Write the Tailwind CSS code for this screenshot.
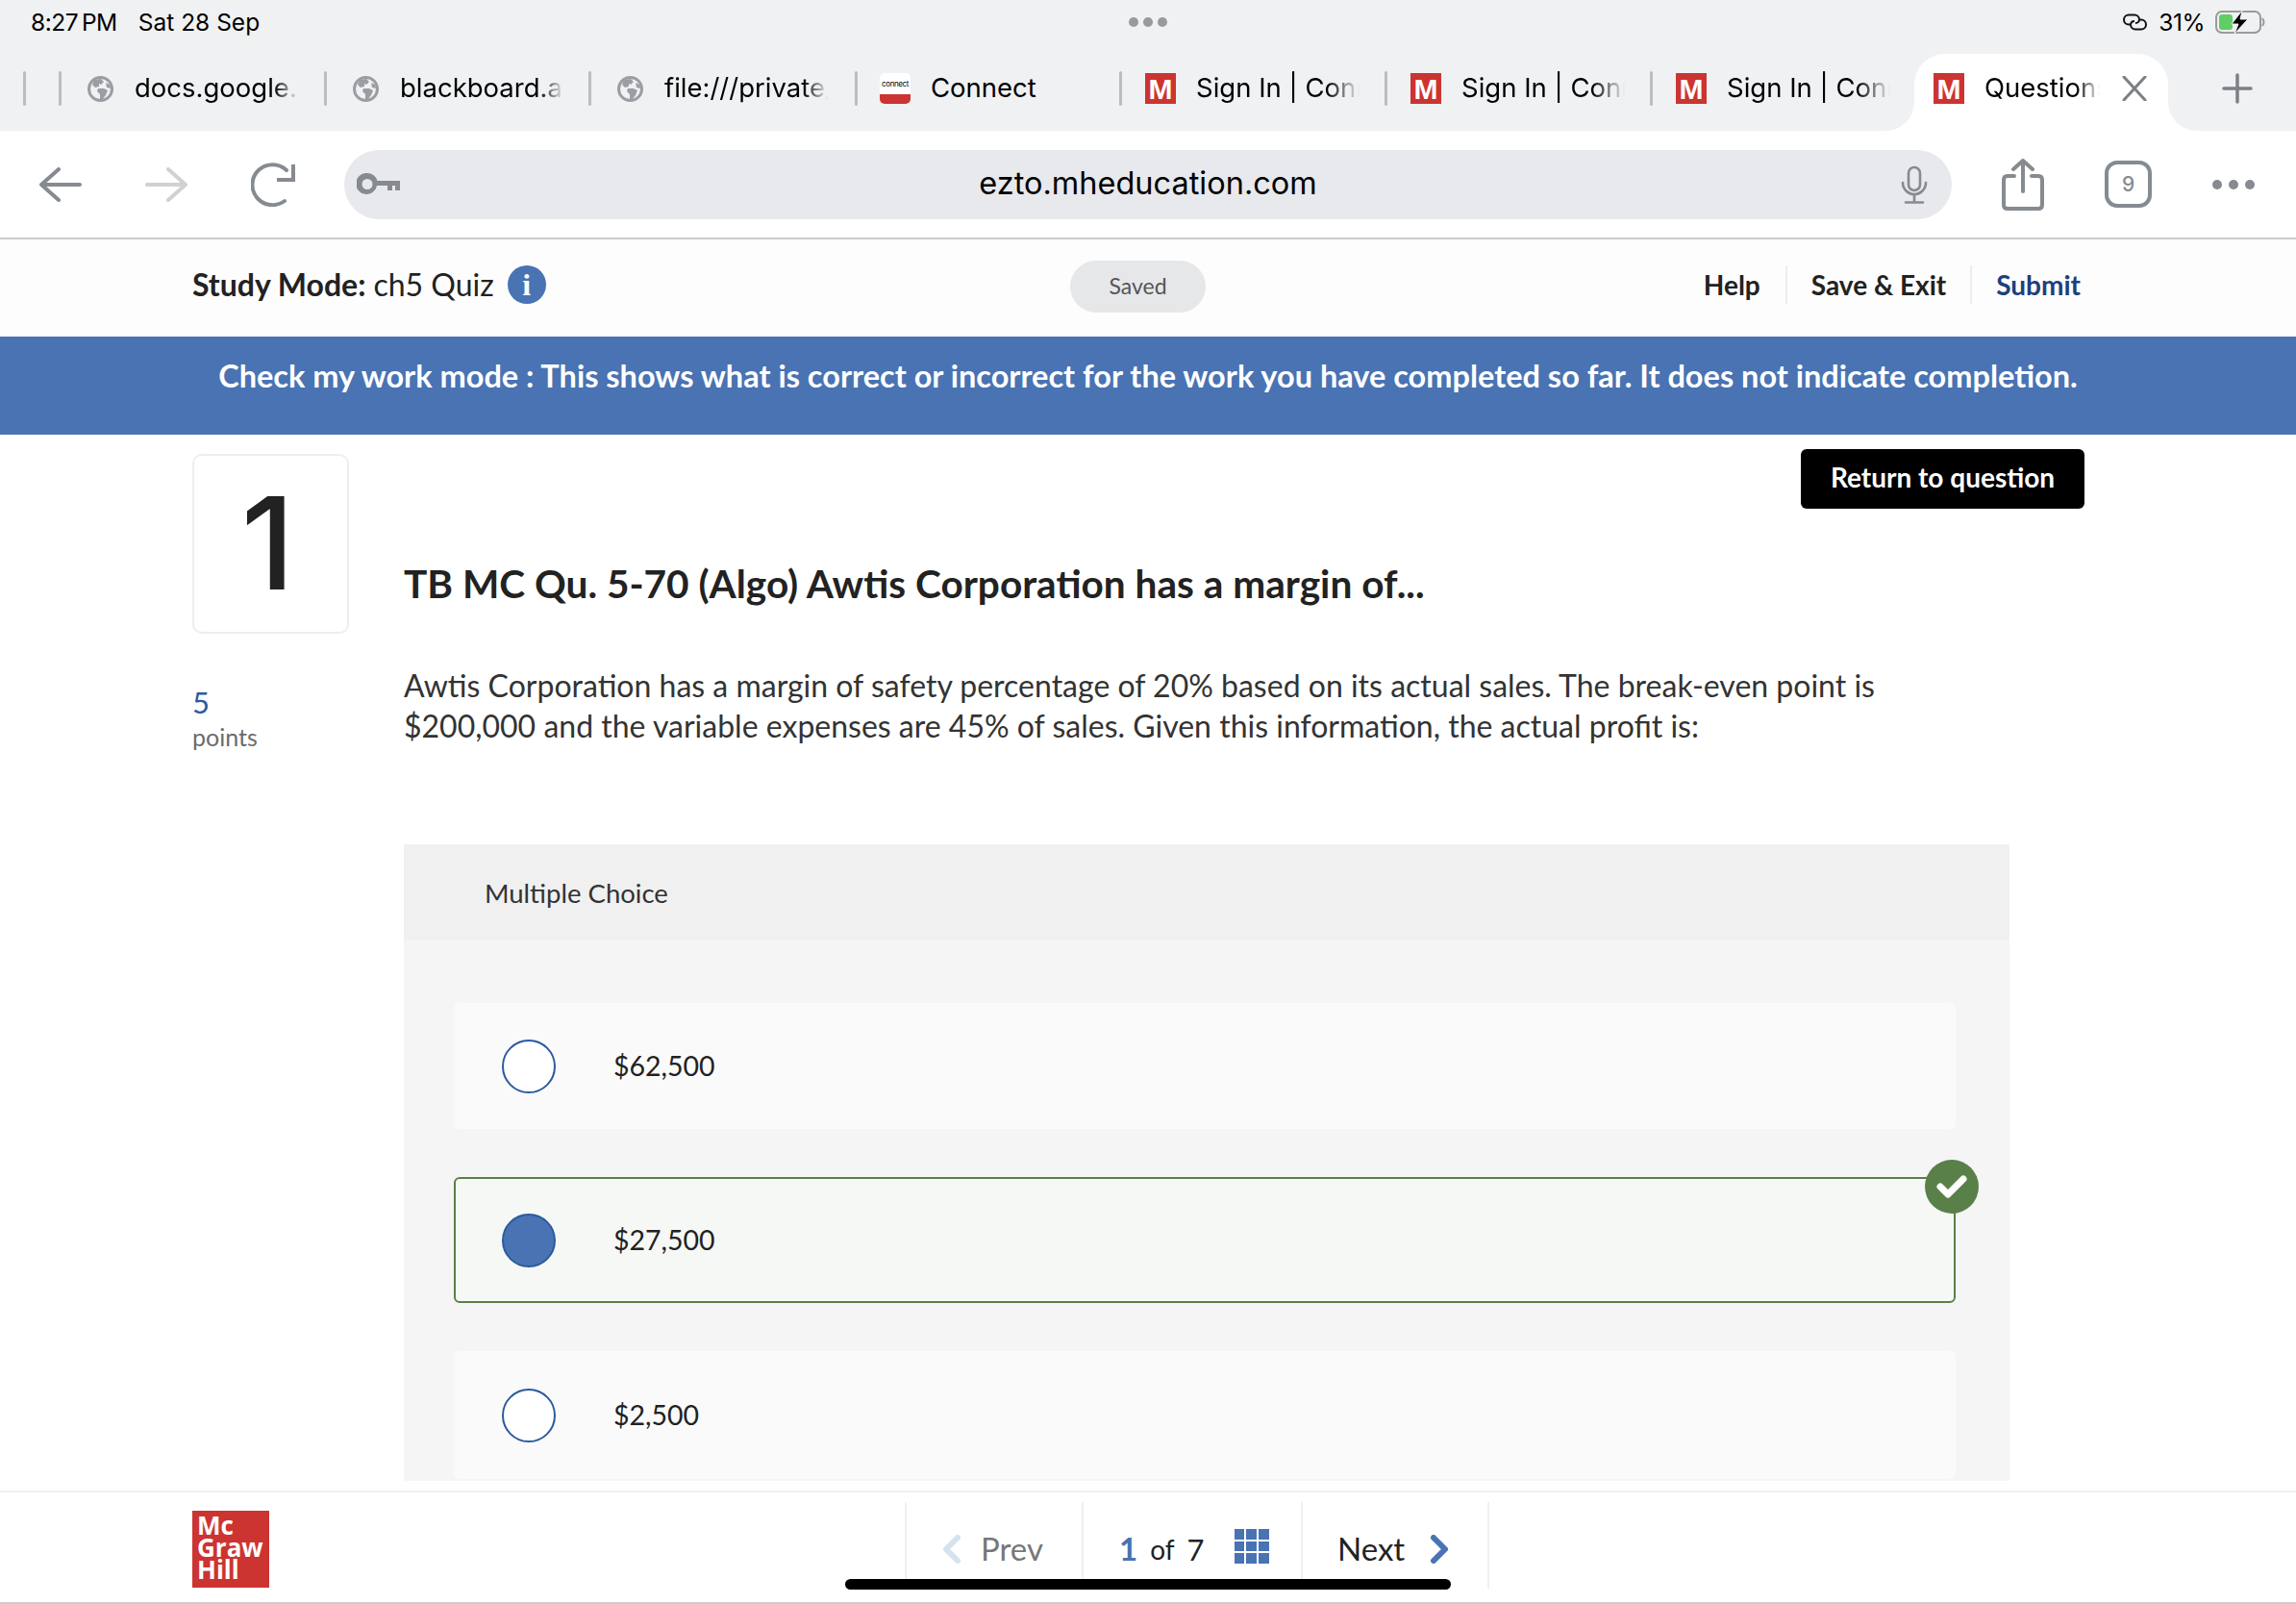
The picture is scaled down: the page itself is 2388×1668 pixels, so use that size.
<!DOCTYPE html>
<html lang="en">
<head>
    <meta charset="UTF-8">
    <title>Question 1 - ch5 Quiz</title>
    <script src="https://cdn.jsdelivr.net/npm/@tailwindcss/browser@4"></script>
</head>
<body class="bg-white">
    <svg class="hidden">
        <symbol id="globe" viewBox="0 0 27 27">
            <circle cx="13.5" cy="13.5" r="12" fill="#f0f1f3" stroke="#9a9ea3" stroke-width="3"/>
            <path d="M7 4 L14 3 L17 6 L14 9 L12 8 L12 11 L8 12 L5 9 Z M11 13 L17 13 L21 15 L19 20 L15 25 L13 24 L13 19 L10 16 Z M19 7 L23 9 L24 13 L20 12 Z" fill="#9a9ea3"/>
        </symbol>
    </svg>

    <div class="relative w-[2388px] h-[1668px] overflow-hidden flex flex-col font-['Lato',sans-serif]">

        <!-- status bar -->
        <div class="h-[46px] bg-[#f0f1f3] flex items-center justify-between pl-[32px] pr-[31px] font-['Inter',sans-serif] text-[24.500px] text-black">
            <div class="w-[400px] flex gap-[22px]"><span class="tracking-[-0.5px]">8:27&#8201;PM</span><span>Sat 28 Sep</span></div>
            <div class="flex gap-[5px] -ml-[2px]">
                <span class="w-[10px] h-[10px] rounded-full bg-[#9a9a9a]"></span>
                <span class="w-[10px] h-[10px] rounded-full bg-[#9a9a9a]"></span>
                <span class="w-[10px] h-[10px] rounded-full bg-[#9a9a9a]"></span>
            </div>
            <div class="w-[400px] flex items-center justify-end gap-[11px]">
                <svg width="27" height="18" viewBox="0 0 27 18" fill="none" stroke="#111" stroke-width="2"><path d="M9 11.500 H7 A5 5 0 0 1 7 1.500 H13 A5 5 0 0 1 18 6.500 A4 4 0 0 1 14 10"/><path d="M18 6.500 H20 A5 5 0 0 1 20 16.500 H14 A5 5 0 0 1 9 11.500 A4 4 0 0 1 13 8"/></svg>
                <span class="tracking-[-0.5px]">31%</span>
                <svg width="53" height="24" viewBox="0 0 53 24"><rect x="1" y="1" width="46" height="22" rx="6" fill="none" stroke="#9a9a9a" stroke-width="2"/><rect x="4" y="4" width="14" height="16" rx="3" fill="#5fcf65"/><path d="M49 8 q3 4 0 8" fill="none" stroke="#9a9a9a" stroke-width="2"/><path d="M28 0 L17 14 H24 L20 24 L34 9 H26 Z" fill="#000" stroke="#f0f1f3" stroke-width="1"/></svg>
            </div>
        </div>

        <!-- tabs -->
        <div class="h-[90px] bg-[#f0f1f3] flex items-center pl-[24px] pt-[2px] font-['Inter',sans-serif] text-[27.500px] text-black">
            <span class="w-[3px] h-[36px] bg-[#bcbdbf] rounded-full"></span>
            <span class="w-[3px] h-[36px] bg-[#bcbdbf] rounded-full ml-[34px]"></span>
            <div class="w-[273px] flex items-center pl-[27px]">
                <svg class="w-[27px] h-[27px]"><use href="#globe"/></svg>
                <span class="ml-[22px] w-[170px] overflow-hidden whitespace-nowrap [mask-image:linear-gradient(to_right,black_85%,transparent)]">docs.google.com</span>
            </div>
            <span class="w-[3px] h-[36px] bg-[#bcbdbf] rounded-full"></span>
            <div class="w-[272px] flex items-center pl-[27px]">
                <svg class="w-[27px] h-[27px]"><use href="#globe"/></svg>
                <span class="ml-[22px] w-[170px] overflow-hidden whitespace-nowrap [mask-image:linear-gradient(to_right,black_85%,transparent)]">blackboard.ac</span>
            </div>
            <span class="w-[3px] h-[36px] bg-[#bcbdbf] rounded-full"></span>
            <div class="w-[274px] flex items-center pl-[27px]">
                <svg class="w-[27px] h-[27px]"><use href="#globe"/></svg>
                <span class="ml-[22px] w-[170px] overflow-hidden whitespace-nowrap [mask-image:linear-gradient(to_right,black_85%,transparent)]">file:///private/var</span>
            </div>
            <span class="w-[3px] h-[36px] bg-[#bcbdbf] rounded-full"></span>
            <div class="w-[272px] flex items-center pl-[23px]">
                <div class="w-[32px] h-[32px] rounded-[5px] overflow-hidden bg-white flex flex-col">
                    <span class="flex-1 flex items-center justify-center text-[8px] leading-none tracking-tighter">connect</span>
                    <span class="h-[10px] bg-[#cc3431]"></span>
                </div>
                <span class="ml-[21px]">Connect</span>
            </div>
            <span class="w-[3px] h-[36px] bg-[#bcbdbf] rounded-full"></span>
            <div class="w-[273px] flex items-center pl-[24px]">
                <span class="w-[32px] h-[32px] bg-[#cc3431] text-white font-['Liberation_Sans'] font-bold text-[30px] flex items-center justify-center">M</span>
                <span class="ml-[21px] w-[170px] overflow-hidden whitespace-nowrap [mask-image:linear-gradient(to_right,black_80%,transparent)]">Sign In | Connect</span>
            </div>
            <span class="w-[3px] h-[36px] bg-[#bcbdbf] rounded-full"></span>
            <div class="w-[273px] flex items-center pl-[24px]">
                <span class="w-[32px] h-[32px] bg-[#cc3431] text-white font-['Liberation_Sans'] font-bold text-[30px] flex items-center justify-center">M</span>
                <span class="ml-[21px] w-[170px] overflow-hidden whitespace-nowrap [mask-image:linear-gradient(to_right,black_80%,transparent)]">Sign In | Connect</span>
            </div>
            <span class="w-[3px] h-[36px] bg-[#bcbdbf] rounded-full"></span>
            <div class="w-[272px] flex items-center pl-[24px]">
                <span class="w-[32px] h-[32px] bg-[#cc3431] text-white font-['Liberation_Sans'] font-bold text-[30px] flex items-center justify-center">M</span>
                <span class="ml-[21px] w-[170px] overflow-hidden whitespace-nowrap [mask-image:linear-gradient(to_right,black_80%,transparent)]">Sign In | Connect</span>
            </div>
            <!-- active tab -->
            <div class="relative self-end w-[264px] h-[80px] bg-white rounded-t-[32px] flex items-center pb-[8px] pl-[20px]">
                <div class="absolute bottom-0 -left-[30px] w-[30px] h-[33px] bg-white"><div class="w-full h-full bg-[#f0f1f3] rounded-br-[30px]"></div></div>
                <div class="absolute bottom-0 -right-[30px] w-[30px] h-[33px] bg-white"><div class="w-full h-full bg-[#f0f1f3] rounded-bl-[30px]"></div></div>
                <span class="w-[32px] h-[32px] bg-[#cc3431] text-white font-['Liberation_Sans'] font-bold text-[30px] flex items-center justify-center">M</span>
                <span class="ml-[21px] w-[120px] overflow-hidden whitespace-nowrap [mask-image:linear-gradient(to_right,black_80%,transparent)]">Questions</span>
                <svg class="ml-[23px]" width="26" height="26" viewBox="0 0 26 26" stroke="#7b8085" stroke-width="3" stroke-linecap="round"><path d="M2 1 L24 25 M24 1 L2 25"/></svg>
            </div>
            <svg class="ml-[56px]" width="32" height="32" viewBox="0 0 32 32" stroke="#7b8085" stroke-width="3.500" stroke-linecap="round"><path d="M16 2 V30 M2 16 H30"/></svg>
        </div>

        <!-- address bar -->
        <div class="h-[113px] bg-white border-b-2 border-[#cccccc] flex items-center pl-[41px] text-[#858b90]">
            <svg width="44" height="36" viewBox="0 0 44 36" fill="none" stroke="#858b90" stroke-width="4" stroke-linecap="round" stroke-linejoin="round"><path d="M20 2 L2 18 L20 34 M2 18 H42"/></svg>
            <svg class="ml-[66px]" width="44" height="36" viewBox="0 0 44 36" fill="none" stroke="#cfd1d3" stroke-width="4" stroke-linecap="round" stroke-linejoin="round"><path d="M24 2 L42 18 L24 34 M2 18 H42"/></svg>
            <svg class="ml-[66px]" width="46" height="46" viewBox="0 0 46 46" fill="none" stroke="#858b90" stroke-width="4" stroke-linecap="round"><path d="M37 8 A21 21 0 1 0 35 40"/><path d="M27 18 H44 V2" stroke-linecap="butt"/></svg>
            <div class="relative ml-[51px] w-[1672px] h-[72px] rounded-full bg-[#e8e9ec] flex items-center justify-center">
                <svg class="absolute left-[13px] top-[24px]" width="45" height="24" viewBox="0 0 45 24" fill="#858b90"><path fill-rule="evenodd" d="M11 0 a11 11 0 0 1 10.500 8 H45 V18 H40 V13 H37 V18 H32 V13 H21 A11 11 0 1 1 11 0 Z M11 6 a5.500 5.500 0 1 0 0 11 a5.500 5.500 0 0 0 0 -11 Z"/></svg>
                <span class="font-['Inter',sans-serif] text-[32.500px] text-black">ezto.mheducation.com</span>
                <svg class="absolute right-[25px] top-[16px]" width="28" height="40" viewBox="0 0 28 40" fill="none" stroke="#858b90" stroke-width="2.600" stroke-linecap="round"><rect x="8" y="2" width="12" height="24" rx="6"/><path d="M2 18 A12 12 0 0 0 26 18 M14 30 V38 M5 38.500 H23"/></svg>
            </div>
            <svg class="ml-[52px]" width="44" height="54" viewBox="0 0 44 54" fill="none" stroke="#858b90" stroke-width="4" stroke-linecap="round" stroke-linejoin="round"><path d="M13 18 H6 Q2 18 2 22 V48 Q2 52 6 52 H38 Q42 52 42 48 V22 Q42 18 38 18 H31 M22 34 V3 M12 11 L22 2 L32 11"/></svg>
            <div class="ml-[63px] w-[49px] h-[49px] rounded-[13px] border-4 border-[#858b90] flex items-center justify-center font-['Inter',sans-serif] text-[21px] font-medium">9</div>
            <div class="ml-[63px] flex gap-[7px]">
                <span class="w-[10px] h-[10px] rounded-full bg-[#858b90]"></span>
                <span class="w-[10px] h-[10px] rounded-full bg-[#858b90]"></span>
                <span class="w-[10px] h-[10px] rounded-full bg-[#858b90]"></span>
            </div>
        </div>

        <!-- quiz header -->
        <div class="h-[101px] bg-[#fdfdfd] flex items-center pl-[200px] pr-[224px] text-[#222]">
            <div class="w-[913px] flex items-center text-[32px] pb-[8px]">
                <b class="font-bold">Study Mode:</b><span class="ml-[8px]">ch5 Quiz</span>
                <span class="ml-[14px] w-[40px] h-[40px] rounded-full bg-[#4973b3] text-white font-['Liberation_Serif'] font-bold text-[32px] flex items-center justify-center">i</span>
            </div>
            <div class="w-[141px] h-[54px] mb-[4px] rounded-full bg-[#e6e7e9] flex items-center justify-center text-[23px] text-[#555]">Saved</div>
            <div class="flex-1 flex items-center justify-end text-[28px] font-bold pb-[7px]">
                <span>Help</span>
                <span class="ml-[26px] w-[2px] h-[40px] bg-[#eeeeee]"></span>
                <span class="ml-[25px]">Save &amp; Exit</span>
                <span class="ml-[25px] w-[2px] h-[40px] bg-[#eeeeee]"></span>
                <span class="ml-[25px] text-[#1f3f7c]">Submit</span>
            </div>
        </div>

        <!-- check my work banner -->
        <div class="h-[102px] bg-[#4973b3] flex justify-center pt-[17px] text-white text-[32.500px] font-bold">
            Check my work mode : This shows what is correct or incorrect for the work you have completed so far. It does not indicate completion.
        </div>

        <!-- question -->
        <div class="relative flex-1 overflow-hidden pl-[200px] flex">
            <div class="w-[220px] shrink-0">
                <div class="mt-[20px] w-[163px] h-[187px] border-2 border-[#eeeeee] rounded-[10px] flex items-center justify-center pr-[6px] pb-[4px] font-['Inter',sans-serif] font-medium text-[134px] leading-none text-[#222]">1</div>
                <div class="mt-[56px] text-[31px] leading-none text-[#2c5a9e]">5</div>
                <div class="mt-[8px] text-[25px] leading-none text-[#6b6b6b]">points</div>
            </div>
            <div class="w-[1670px]">
                <div class="mt-[128px] text-[40.600px] leading-[54px] font-bold text-[#222]">TB MC Qu. 5-70 (Algo) Awtis Corporation has a margin of...</div>
                <p class="mt-[58px] text-[32px] leading-[42px] text-[#333]">Awtis Corporation has a margin of safety percentage of 20% based on its actual sales. The break-even point is<br>$200,000 and the variable expenses are 45% of sales. Given this information, the actual profit is:</p>
                <div class="mt-[102px] bg-[#f5f5f5]">
                    <div class="h-[99px] bg-[#f0f0f0] flex items-center pl-[84px] pt-[2px] text-[27.500px] text-[#333]">Multiple Choice</div>
                    <div class="pt-[66px] pb-[2px] pl-[52px] pr-[56px] flex flex-col gap-[50px] text-[28.500px] text-[#222]">
                        <div class="h-[131px] bg-[#fafafa] rounded-[6px] flex items-center pl-[50px]">
                            <span class="w-[56px] h-[56px] rounded-full border-2 border-[#2c5a9e] bg-white"></span>
                            <span class="ml-[60px]">$62,500</span>
                        </div>
                        <div class="relative h-[131px] bg-[#f6f8f6] border-2 border-[#5a8049] rounded-[6px] flex items-center pl-[48px]">
                            <span class="w-[56px] h-[56px] rounded-full border-2 border-[#2c5a9e] bg-[#4973b3]"></span>
                            <span class="ml-[60px]">$27,500</span>
                            <span class="absolute -top-[20px] -right-[26px] w-[56px] h-[56px] rounded-full bg-[#5a8049] flex items-center justify-center">
                                <svg width="32" height="26" viewBox="0 0 32 26" fill="none" stroke="#fff" stroke-width="7" stroke-linecap="round" stroke-linejoin="round"><path d="M4 13 L12 21 L28 5"/></svg>
                            </span>
                        </div>
                        <div class="h-[133px] bg-[#fafafa] rounded-[6px] flex items-center pl-[50px]">
                            <span class="w-[56px] h-[56px] rounded-full border-2 border-[#2c5a9e] bg-white"></span>
                            <span class="ml-[60px]">$2,500</span>
                        </div>
                    </div>
                </div>
            </div>
            <!-- return button sits over the top right of the question -->
            <div class="absolute left-[1873px] top-[15px] w-[295px] h-[62px] pb-[4px] bg-black rounded-[6px] flex items-center justify-center text-white text-[28px] font-bold">Return to question</div>
        </div>

        <!-- footer -->
        <div class="h-[118px] bg-white border-t-2 border-b-2 border-t-[#f0f0f0] border-b-[#cccccc] flex items-start pl-[200px]">
            <div class="mt-[19px] w-[80px] h-[80px] bg-[#cc3431] text-white font-['Open_Sans'] font-bold text-[26px] leading-[23px] pl-[5px] pt-[4px]">Mc<br>Graw<br>Hill</div>
            <div class="ml-[661px] mt-[10px] h-[90px] flex border-x-2 border-[#f0f0f0] text-[33px]">
                <div class="w-[184px] flex items-center pl-[37px] pt-[8px] border-r-2 border-[#f0f0f0] text-[#777]">
                    <svg width="20" height="30" viewBox="0 0 20 30" fill="none" stroke="#d7e2f0" stroke-width="6" stroke-linecap="round" stroke-linejoin="round"><path d="M16 3 L4 15 L16 27"/></svg>
                    <span class="ml-[20px]">Prev</span>
                </div>
                <div class="w-[228px] flex items-center pl-[37px] pt-[8px] border-r-2 border-[#f0f0f0] text-[#222]">
                    <b class="font-bold text-[#4973b3]">1</b>
                    <span class="ml-[13px] text-[28px]">of</span>
                    <span class="ml-[13px] text-[31px]">7</span>
                    <div class="ml-[31px] -mt-[6px] w-[36px] h-[36px] grid grid-cols-3 gap-[2px]">
                        <span class="bg-[#4973b3]"></span><span class="bg-[#4973b3]"></span><span class="bg-[#4973b3]"></span>
                        <span class="bg-[#4973b3]"></span><span class="bg-[#4973b3]"></span><span class="bg-[#4973b3]"></span>
                        <span class="bg-[#4973b3]"></span><span class="bg-[#4973b3]"></span><span class="bg-[#4973b3]"></span>
                    </div>
                </div>
                <div class="w-[192px] flex items-center pl-[36px] pt-[8px] text-[#222]">
                    <span>Next</span>
                    <svg class="ml-[26px]" width="20" height="30" viewBox="0 0 20 30" fill="none" stroke="#4973b3" stroke-width="6" stroke-linecap="round" stroke-linejoin="round"><path d="M4 3 L16 15 L4 27"/></svg>
                </div>
            </div>
        </div>

        <!-- home indicator -->
        <div class="absolute left-[879px] top-[1642px] w-[630px] h-[11px] rounded-full bg-black"></div>
    </div>
</body>
</html>
